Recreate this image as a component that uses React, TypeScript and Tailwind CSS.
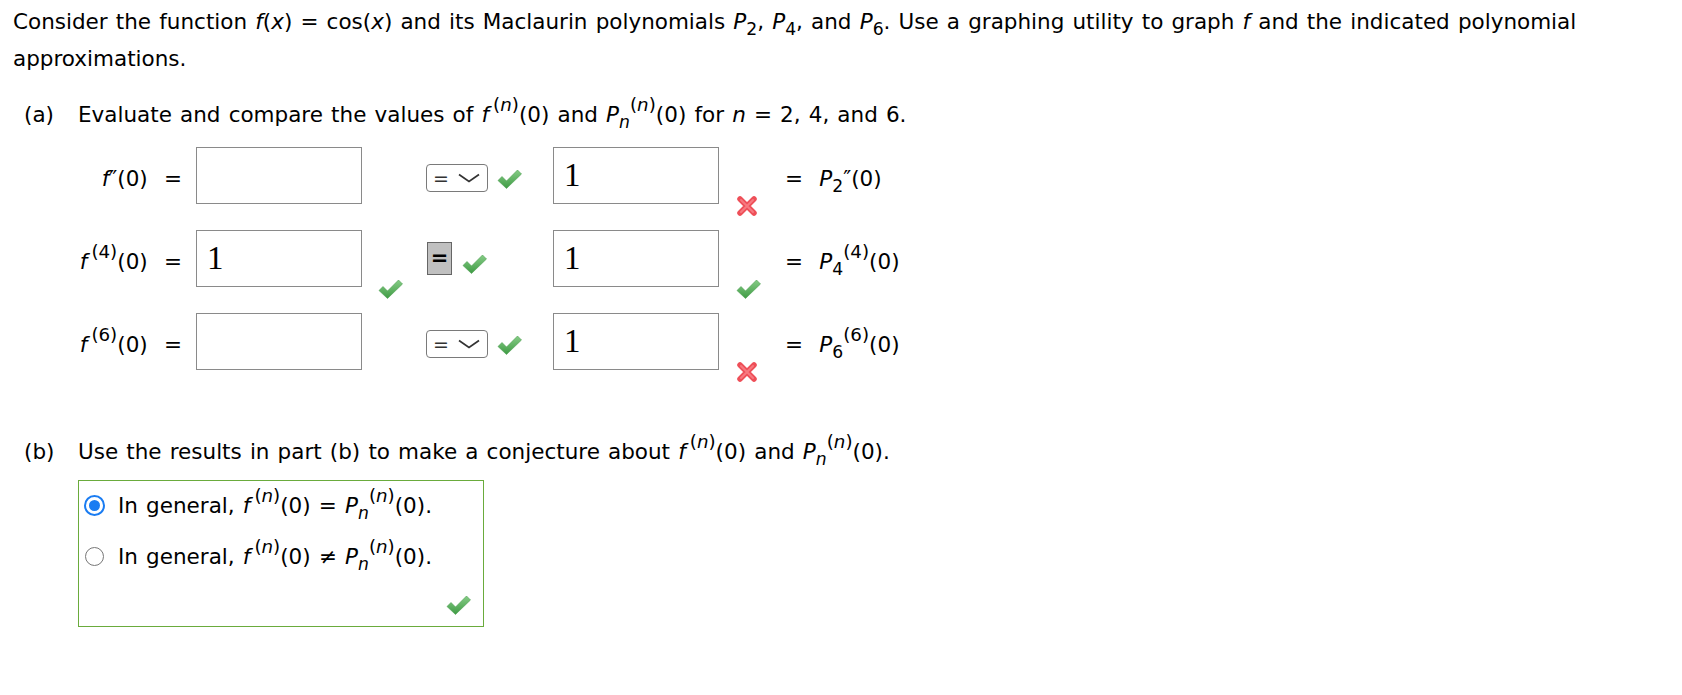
import React from "react";

const Check = ({ className = "" }: { className?: string }) => (
  <svg width="25" height="20" viewBox="0 0 25 20" className={className}>
    <defs>
      <linearGradient id="cg" x1="0" y1="0" x2="0" y2="1">
        <stop offset="0" stopColor="#86cc86" />
        <stop offset="1" stopColor="#3f9b44" />
      </linearGradient>
    </defs>
    <path d="M1 11.5 L5 7.5 L9.5 12 L20.5 1 L24.5 5 L9.5 19.5 Z" fill="url(#cg)" stroke="#4a9e4f" strokeWidth="0.6" strokeLinejoin="round" />
  </svg>
);

const Cross = ({ className = "" }: { className?: string }) => (
  <svg width="22" height="22" viewBox="0 0 22 22" className={className}>
    <g strokeLinecap="round">
      <path d="M4 4 L18 18 M18 4 L4 18" stroke="#ee4f58" strokeWidth="5.5" />
      <path d="M5 5 L17 17 M17 5 L5 17" stroke="#f77a80" strokeWidth="2" />
    </g>
  </svg>
);

const Chevron = () => (
  <svg width="22" height="10" viewBox="0 0 22 10">
    <polyline points="1,1.5 11,8.5 21,1.5" fill="none" stroke="#333" strokeWidth="1.7" />
  </svg>
);

const I = ({ children }: { children: React.ReactNode }) => <i>{children}</i>;
const Sup = ({ children, f = false }: { children: React.ReactNode; f?: boolean }) => (
  <sup className={f ? "text-[0.85em] top-[-0.6em] ml-[4px]" : "text-[0.85em] top-[-0.6em]"}>{children}</sup>
);
const Sub = ({ children }: { children: React.ReactNode }) => (
  <sub className="text-[0.8em] bottom-[-0.35em]">{children}</sub>
);

const Fn = () => (
  <>
    <I>f</I>
    <Sup f>
      (<I>n</I>)
    </Sup>
    (0)
  </>
);
const Pn = () => (
  <>
    <I>P</I>
    <Sub>
      <I>n</I>
    </Sub>
    <Sup>
      (<I>n</I>)
    </Sup>
    (0)
  </>
);

const Box = ({ value }: { value?: string }) => (
  <div className="w-[166px] h-[57px] border border-[#8a8a8a] flex items-center pl-[10px] shrink-0 bg-white">
    {value && (
      <span className="text-[33px] leading-none" style={{ fontFamily: '"Liberation Serif", serif' }}>
        {value}
      </span>
    )}
  </div>
);

const Select = () => (
  <div className="w-[62px] h-[28px] border border-[#7a7a7a] rounded-[4px] flex items-center pl-[6px] gap-[9px] mt-[5px] shrink-0">
    <span className="text-[19px] leading-none text-[#333]">=</span>
    <Chevron />
  </div>
);

type Mark = "check" | "cross" | null;

const Row = ({
  label,
  v1,
  m1,
  mid,
  v2,
  m2,
  right,
}: {
  label: React.ReactNode;
  v1?: string;
  m1: Mark;
  mid: "select" | "eq";
  v2?: string;
  m2: Mark;
  right: React.ReactNode;
}) => (
  <div className="flex items-center h-[57px]">
    <div className="w-[196px] shrink-0 text-right pr-[14px] pt-[8px] whitespace-nowrap">{label}</div>
    <Box value={v1} />
    <div className="relative w-[64px] self-stretch shrink-0">
      {m1 === "check" && <Check className="absolute left-[16px] bottom-[-12px]" />}
      {m1 === "cross" && <Cross className="absolute left-[16px] bottom-[-13px]" />}
    </div>
    <div className="w-[127px] shrink-0 flex items-center">
      {mid === "select" ? (
        <>
          <Select />
          <Check className="ml-[9px] mt-[6px]" />
        </>
      ) : (
        <>
          <div className="ml-[1px] w-[25px] h-[33px] bg-[#c0c0c0] border border-[#666] flex items-center justify-center text-[21px] font-bold leading-none">
            =
          </div>
          <Check className="ml-[10px] mt-[10px]" />
        </>
      )}
    </div>
    <Box value={v2} />
    <div className="relative w-[66px] self-stretch shrink-0">
      {m2 === "check" && <Check className="absolute left-[17px] bottom-[-12px]" />}
      {m2 === "cross" && <Cross className="absolute left-[17px] bottom-[-13px]" />}
    </div>
    <div className="pt-[8px] whitespace-nowrap">{right}</div>
  </div>
);

export default function App() {
  return (
    <div
      className="w-[1682px] h-[695px] bg-white text-black text-[21.5px] overflow-hidden [word-spacing:1.3px]"
      style={{ fontFamily: '"DejaVu Sans", Verdana, sans-serif' }}
    >
      <p className="pl-[13px] pt-[3px] leading-[37px] w-[1600px]">
        Consider the function <I>f</I>(<I>x</I>) = cos(<I>x</I>) and its Maclaurin polynomials <I>P</I>
        <Sub>2</Sub>, <I>P</I>
        <Sub>4</Sub>, and <I>P</I>
        <Sub>6</Sub>. Use a graphing utility to graph <I>f</I> and the indicated polynomial approximations.
      </p>

      <div className="flex leading-[37px] mt-[19px]">
        <div className="w-[78px] pl-[24px] shrink-0">(a)</div>
        <div>
          Evaluate and compare the values of <Fn /> and <Pn /> for <I>n</I> = 2, 4, and 6.
        </div>
      </div>

      <div className="flex flex-col gap-[26px] mt-[14px]">
        <Row
          label={
            <>
              <I>f</I>″(0)&nbsp;&nbsp;=
            </>
          }
          m1={null}
          mid="select"
          v2="1"
          m2="cross"
          right={
            <>
              =&nbsp;&nbsp;<I>P</I>
              <Sub>2</Sub>″(0)
            </>
          }
        />
        <Row
          label={
            <>
              <I>f</I>
              <Sup f>(4)</Sup>(0)&nbsp;&nbsp;=
            </>
          }
          v1="1"
          m1="check"
          mid="eq"
          v2="1"
          m2="check"
          right={
            <>
              =&nbsp;&nbsp;<I>P</I>
              <Sub>4</Sub>
              <Sup>(4)</Sup>(0)
            </>
          }
        />
        <Row
          label={
            <>
              <I>f</I>
              <Sup f>(6)</Sup>(0)&nbsp;&nbsp;=
            </>
          }
          m1={null}
          mid="select"
          v2="1"
          m2="cross"
          right={
            <>
              =&nbsp;&nbsp;<I>P</I>
              <Sub>6</Sub>
              <Sup>(6)</Sup>(0)
            </>
          }
        />
      </div>

      <div className="flex leading-[37px] mt-[63px]">
        <div className="w-[78px] pl-[24px] shrink-0">(b)</div>
        <div>
          Use the results in part (b) to make a conjecture about <Fn /> and <Pn />.
        </div>
      </div>

      <div className="relative ml-[78px] mt-[10px] w-[406px] h-[147px] border border-[#6aab3c] pt-[6px] pl-[5px]">
        <div className="flex flex-col gap-[14px] leading-[37px]">
          <div className="flex items-center">
            <span className="w-[21px] h-[21px] rounded-full border-[2px] border-[#1a7cf2] flex items-center justify-center shrink-0">
              <span className="w-[11px] h-[11px] rounded-full bg-[#1a7cf2]" />
            </span>
            <span className="ml-[13px] whitespace-nowrap">
              In general, <Fn /> = <Pn />.
            </span>
          </div>
          <div className="flex items-center">
            <span className="w-[21px] h-[21px] flex items-center justify-center shrink-0">
              <span className="w-[19px] h-[19px] rounded-full border border-[#777]" />
            </span>
            <span className="ml-[13px] whitespace-nowrap">
              In general, <Fn /> ≠ <Pn />.
            </span>
          </div>
        </div>
        <Check className="absolute right-[12px] bottom-[11px]" />
      </div>
    </div>
  );
}
